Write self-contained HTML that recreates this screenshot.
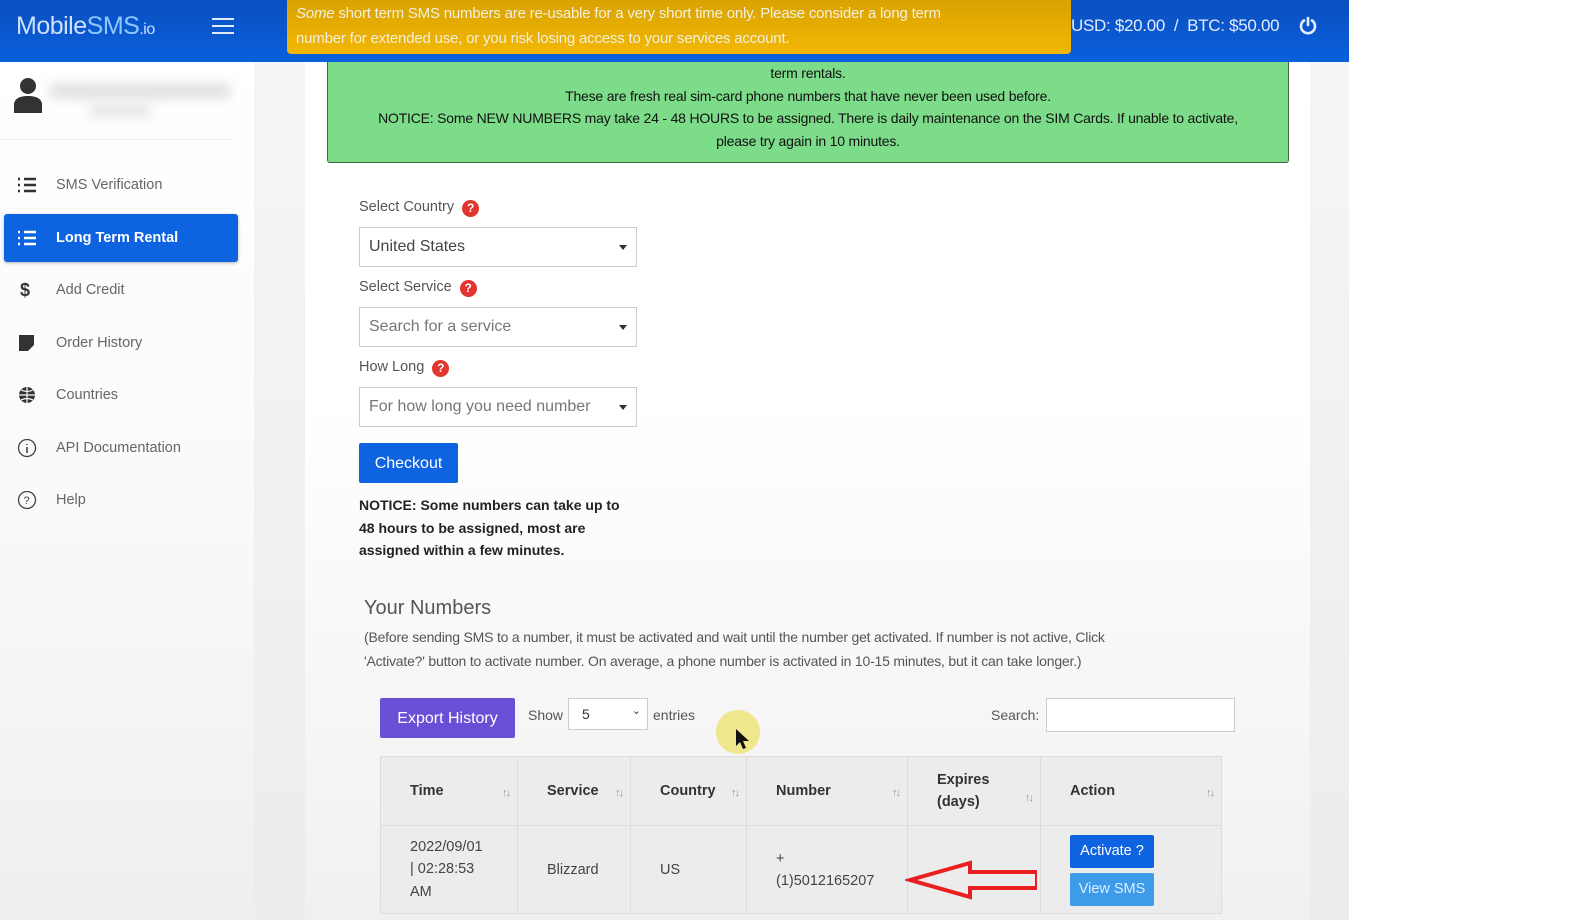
<!DOCTYPE html>
<html><head><meta charset="utf-8"><style>
*{box-sizing:border-box;margin:0;padding:0}
body{width:1569px;height:920px;overflow:hidden;font-family:"Liberation Sans",sans-serif;background:#fff;position:relative;color:#333}
.hdr{position:absolute;left:0;top:0;width:1349px;height:62px;background:linear-gradient(#0a4fc0,#0a60dc)}
.logo{position:absolute;left:16px;top:12px;font-size:25px;color:#cfe0ff;letter-spacing:-0.5px}
.logo b{color:#8fc8ff;font-weight:normal}
.burger{position:absolute;left:212px;top:13px;width:22px}
.burger i{display:block;height:2px;background:#dfe9ff;margin:5px 0}
.warn{position:absolute;left:287px;top:0;width:784px;height:54px;background:linear-gradient(#d9a200,#f2b705);border-radius:0 0 4px 4px;color:#f3f0e0;font-size:15px;line-height:25px;padding:1px 9px;letter-spacing:-0.2px;white-space:nowrap}
.bal{position:absolute;left:1071px;top:16px;color:#e5ecff;font-size:17px;letter-spacing:-0.3px}
.side{position:absolute;left:0;top:62px;width:254px;height:858px;background:linear-gradient(#fff,#fafafa 50%,#eee)}
.side .u{height:78px;border-bottom:1px solid #eee;margin-right:20px}
.nav{position:absolute;left:4px;width:234px;height:48px;font-size:14.5px;color:#666;padding-left:52px;line-height:48px}
.nav.on{background:#0d63e0;color:#fff;font-weight:bold;border-radius:3px;box-shadow:0 1px 3px rgba(0,0,0,.3)}
.nav svg{position:absolute;left:13px;top:15px}
.main{position:absolute;left:254px;top:62px;width:1095px;height:858px;background:linear-gradient(#f5f5f5,#ececec)}
.card{position:absolute;left:51px;top:0;width:1005px;height:858px;background:linear-gradient(#fff 40%,#f0f0f0)}
.green{position:absolute;left:327px;top:62px;width:962px;height:101px;background:#7ddc89;border:1px solid #3b6b41;border-top:none;border-radius:0 0 3px 3px;text-align:center;font-size:14px;line-height:22.5px;color:#111;letter-spacing:-0.2px}
.lbl{position:absolute;left:359px;font-size:14.5px;color:#555}
.q{display:inline-block;width:17px;height:17px;border-radius:50%;background:#e3342f;color:#fff;font-size:12px;font-weight:bold;text-align:center;line-height:17px;margin-left:8px;vertical-align:-1px}
.sel{position:absolute;left:359px;width:278px;height:40px;border:1px solid #ccc;background:#fff;font-size:16px;color:#444;padding:10px 9px}
.sel:after{content:"";position:absolute;right:9px;top:17px;border:4px solid transparent;border-top:5px solid #333}
.ph{color:#777}
.btn{position:absolute;color:#fff;text-align:center;border-radius:2px}
th,td{border:1px solid #ddd}
th{position:relative}
th:after{content:"\2191\2193";position:absolute;right:8px;top:30px;font-size:11px;color:#999;font-weight:normal;letter-spacing:-2px}
</style></head><body>
<div class="hdr">
<div class="logo">Mobile<b>SMS</b><span style="font-size:16px;color:#cfe0ff">.io</span></div>
<div class="burger"><i></i><i></i><i></i></div>
<div class="warn"><i>Some</i> short term SMS numbers are re-usable for a very short time only. Please consider a long term<br>number for extended use, or you risk losing access to your services account.</div>
<div class="bal">USD: $20.00 &nbsp;/ &nbsp;BTC: $50.00</div>
<svg style="position:absolute;left:1298px;top:16px" width="20" height="20" viewBox="0 0 20 20"><path d="M6 4.5A7 7 0 1 0 14 4.5" fill="none" stroke="#e5ecff" stroke-width="2.6" stroke-linecap="round"/><path d="M10 2v7" stroke="#e5ecff" stroke-width="2.6" stroke-linecap="round"/></svg>
</div>
<div class="side"><div class="u">
<svg style="position:absolute;left:12px;top:15px" width="32" height="36" viewBox="0 0 32 36"><circle cx="16" cy="9" r="8" fill="#333"/><path d="M2 36v-8c0-6 5-9 14-9s14 3 14 9v8z" fill="#333"/></svg>
<div style="position:absolute;left:50px;top:22px;width:180px;height:14px;background:#ddd;filter:blur(6px)"></div>
<div style="position:absolute;left:90px;top:44px;width:60px;height:10px;background:#ddd;filter:blur(6px)"></div>
</div></div>
<div class="nav" style="top:161px"><svg width="20" height="18"><path d="M1 3h2M7 3h12M1 9h2M7 9h12M1 15h2M7 15h12" stroke="#333" stroke-width="2.5"/></svg>SMS Verification</div>
<div class="nav on" style="top:214px"><svg width="20" height="18"><path d="M1 3h2M7 3h12M1 9h2M7 9h12M1 15h2M7 15h12" stroke="#fff" stroke-width="2.5"/></svg>Long Term Rental</div>
<div class="nav" style="top:266px"><span style="position:absolute;left:16px;font-weight:bold;color:#333;font-size:18px">$</span>Add Credit</div>
<div class="nav" style="top:319px"><svg width="20" height="18"><path d="M2 1h15v10l-6 6H2z" fill="#333"/></svg>Order History</div>
<div class="nav" style="top:371px"><svg width="20" height="20"><circle cx="10" cy="9" r="8" fill="#333"/><path d="M2 9h16M10 1v16M4 4q6 3 12 0M4 14q6-3 12 0" stroke="#fff" stroke-width="1.2" fill="none"/></svg>Countries</div>
<div class="nav" style="top:424px"><svg width="20" height="20"><circle cx="10" cy="9" r="8.5" fill="none" stroke="#444" stroke-width="1.3"/><path d="M10 8v6M10 5v1" stroke="#444" stroke-width="1.6"/></svg>API Documentation</div>
<div class="nav" style="top:476px"><svg width="20" height="20"><circle cx="10" cy="9" r="8.5" fill="none" stroke="#444" stroke-width="1.3"/><text x="6.5" y="13" font-size="11" fill="#444" font-family="Liberation Sans">?</text></svg>Help</div>
<div class="main"><div class="card"></div></div>
<div class="green">term rentals.<br>These are fresh real sim-card phone numbers that have never been used before.<br>NOTICE: Some NEW NUMBERS may take 24 - 48 HOURS to be assigned. There is daily maintenance on the SIM Cards. If unable to activate,<br>please try again in 10 minutes.</div>
<div class="lbl" style="top:199px">Select Country<span class="q">?</span></div>
<div class="sel" style="top:227px">United States</div>
<div class="lbl" style="top:279px">Select Service<span class="q">?</span></div>
<div class="sel" style="top:307px"><span class="ph">Search for a service</span></div>
<div class="lbl" style="top:359px">How Long<span class="q">?</span></div>
<div class="sel" style="top:387px"><span class="ph">For how long you need number</span></div>
<div class="btn" style="left:359px;top:443px;width:99px;height:40px;background:#0d63e0;font-size:16px;line-height:42px">Checkout</div>
<div style="position:absolute;left:359px;top:494px;width:300px;font-size:14px;font-weight:bold;line-height:22.5px;color:#222">NOTICE: Some numbers can take up to<br>48 hours to be assigned, most are<br>assigned within a few minutes.</div>
<div style="position:absolute;left:364px;top:597px;font-size:20px;color:#555">Your Numbers</div>
<div style="position:absolute;left:364px;top:625px;width:880px;font-size:14px;color:#555;line-height:24px;letter-spacing:-0.2px;white-space:nowrap">(Before sending SMS to a number, it must be activated and wait until the number get activated. If number is not active, Click<br>'Activate?' button to activate number. On average, a phone number is activated in 10-15 minutes, but it can take longer.)</div>
<div class="btn" style="left:380px;top:698px;width:135px;height:40px;background:#6a4fd6;font-size:16px;line-height:42px">Export History</div>
<div style="position:absolute;left:528px;top:707px;font-size:14px;color:#555">Show</div>
<div style="position:absolute;left:568px;top:698px;width:80px;height:32px;border:1px solid #ccc;background:#fff;font-size:14px;padding:7px 13px">5<span style="position:absolute;right:6px;top:5px;font-size:11px">&#8964;</span></div>
<div style="position:absolute;left:653px;top:707px;font-size:14px;color:#555">entries</div>
<div style="position:absolute;left:716px;top:710px;width:44px;height:44px;border-radius:50%;background:#f0e68c"></div>
<svg style="position:absolute;left:734px;top:728px" width="16" height="24"><path d="M2 1l0 17 4-4 3 7 3-1-3-7 6 0z" fill="#111"/></svg>
<div style="position:absolute;left:991px;top:707px;font-size:14px;color:#555">Search:</div>
<div style="position:absolute;left:1046px;top:698px;width:189px;height:34px;border:1px solid #ccc;background:#fff"></div>
<table style="position:absolute;left:380px;top:756px;width:842px;border-collapse:collapse;font-size:14.5px;color:#444;background:#ececec">
<tr style="height:69px;font-weight:bold;color:#333"><th style="width:137px;text-align:left;padding-left:29px">Time</th><th style="width:113px;text-align:left;padding-left:29px">Service</th><th style="width:116px;text-align:left;padding-left:29px">Country</th><th style="width:161px;text-align:left;padding-left:29px">Number</th><th style="width:133px;text-align:left;padding-left:29px;line-height:22px">Expires<br>(days)</th><th style="text-align:left;padding-left:29px">Action</th></tr>
<tr style="height:88px"><td style="padding-left:29px;line-height:22.5px">2022/09/01<br>| 02:28:53<br>AM</td><td style="padding-left:29px">Blizzard</td><td style="padding-left:29px">US</td><td style="padding-left:29px;line-height:22px">+<br>(1)5012165207</td><td></td><td></td></tr>
</table>
<div class="btn" style="left:1070px;top:835px;width:84px;height:33px;background:#0d63e0;font-size:14.5px;line-height:33px">Activate ?</div>
<div class="btn" style="left:1070px;top:873px;width:84px;height:33px;background:#3d9be9;font-size:14.5px;line-height:33px;color:#dbeeff">View SMS</div>
<svg style="position:absolute;left:905px;top:860px" width="132" height="40"><path d="M5 20L65 3v9h67v16H65v9z" fill="none" stroke="#e82020" stroke-width="4"/></svg>
</body></html>
